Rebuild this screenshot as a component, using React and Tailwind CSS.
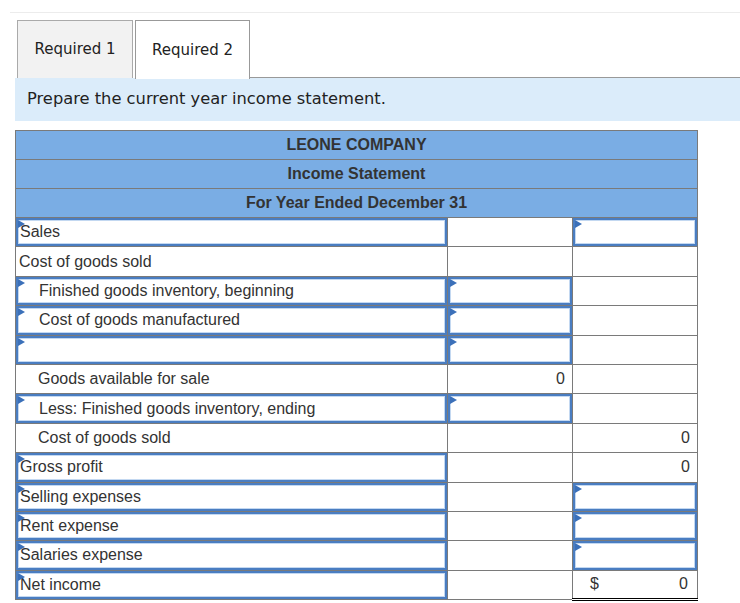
import React from "react";

const Flag = () => (
  <span className="absolute left-0 top-0 w-0 h-0 border-y-[4px] border-y-transparent border-l-[7px] border-l-[#3b70b9]"></span>
);

const InputBox = ({ children, indent }) => (
  <div
    className={
      "relative h-full w-full border-2 border-[#4a7dc1] shadow-[inset_0_0_0_1px_#c3d8f1] bg-white flex items-center " +
      (indent ? "pl-[21px]" : "pl-[2px]")
    }
  >
    <Flag />
    {children}
  </div>
);

const rows = [
  { label: "Sales", input: true, c2: null, c3: "input" },
  { label: "Cost of goods sold" },
  { label: "Finished goods inventory, beginning", input: true, indent: true, c2: "input" },
  { label: "Cost of goods manufactured", input: true, indent: true, c2: "input" },
  { label: "", input: true, indent: true, c2: "input" },
  { label: "Goods available for sale", indent: true, c2: "0", c2Top: true },
  { label: "Less: Finished goods inventory, ending", input: true, indent: true, c2: "input" },
  { label: "Cost of goods sold", indent: true, c2Top: true, c3: "0" },
  { label: "Gross profit", input: true, c3: "0", c3Top: true },
  { label: "Selling expenses", input: true, c3: "input" },
  { label: "Rent expense", input: true, c3: "input" },
  { label: "Salaries expense", input: true, c3: "input" },
  { label: "Net income", input: true, c3: "$0", c3Double: true },
];

const ValueCell = ({ v, top, dbl }) => {
  const cls =
    "border border-[#7a7a7a] p-0 h-[29.4px] " +
    (top ? "border-t-black " : "") +
    (dbl ? "border-b-[3px] border-b-black border-double " : "");
  if (v === "input")
    return (
      <td className={cls}>
        <InputBox />
      </td>
    );
  if (v === "$0")
    return (
      <td className={cls}>
        <div className="flex justify-between px-[9px] items-center">
          <span className="pl-[8px]">$</span>
          <span>0</span>
        </div>
      </td>
    );
  return (
    <td className={cls + "text-right pr-[7px]"}>{v}</td>
  );
};

export default function App() {
  return (
    <div className="w-[740px] h-[603px] bg-white overflow-hidden pt-[12px]">
      <div className="ml-[10px] border-t border-[#ececec]"></div>
      <div className="flex mt-[7px] ml-[15px] font-['DejaVu_Sans',Verdana,sans-serif] text-[15px] text-[#222]">
        <div className="ml-[2px] w-[116px] h-[58px] bg-[#f2f2f2] border border-[#aaa] border-b-0 flex items-center justify-center">
          Required 1
        </div>
        <div className="ml-[2px] w-[115px] h-[59px] bg-white border border-[#999] border-b-0 flex items-center justify-center -mb-px relative z-10">
          Required 2
        </div>
        <div className="flex-1 border-b border-[#999]"></div>
      </div>
      <div className="ml-[15px] h-[43px] bg-[#dbecfa] flex items-center pl-[12px] font-['DejaVu_Sans',Verdana,sans-serif] text-[16.3px] text-[#222]">
        Prepare the current year income statement.
      </div>
      <table className="mt-[9px] ml-[15px] w-[682px] border-collapse table-fixed font-['Liberation_Sans',Arial,sans-serif] text-[16px] text-[#333]">
        <colgroup>
          <col className="w-[432px]" />
          <col className="w-[125px]" />
          <col className="w-[125px]" />
        </colgroup>
        <thead>
          {["LEONE COMPANY", "Income Statement", "For Year Ended December 31"].map((t) => (
            <tr key={t}>
              <th colSpan={3} className="h-[29px] bg-[#7aade4] border border-[#7a7a7a] font-bold text-center p-0">
                {t}
              </th>
            </tr>
          ))}
        </thead>
        <tbody>
          {rows.map((r, i) => (
            <tr key={i}>
              <td className="border border-[#7a7a7a] p-0 h-[29.4px]">
                {r.input ? (
                  <InputBox indent={r.indent}>{r.label}</InputBox>
                ) : (
                  <div className={r.indent ? "pl-[22px]" : "pl-[3px]"}>{r.label}</div>
                )}
              </td>
              <ValueCell v={r.c2} top={r.c2Top} />
              <ValueCell v={r.c3} top={r.c3Top} dbl={r.c3Double} />
            </tr>
          ))}
        </tbody>
      </table>
    </div>
  );
}
